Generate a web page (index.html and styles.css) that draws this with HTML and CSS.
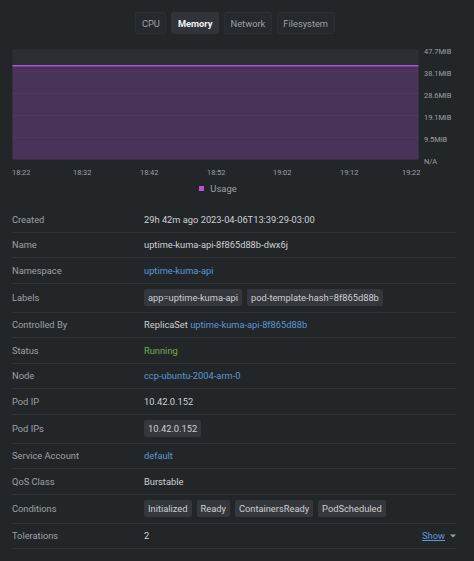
FILE: index.html
```html
<!DOCTYPE html>
<html>
<head>
<meta charset="utf-8">
<link rel="stylesheet" href="styles.css">
</head>
<body>
<div class="tabs">
  <div class="tab">CPU</div>
  <div class="tab active">Memory</div>
  <div class="tab">Network</div>
  <div class="tab">Filesystem</div>
</div>
<svg class="chart" width="474" height="141" viewBox="0 0 474 141">
  <rect x="12.5" y="9.5" width="406" height="110" fill="#2b2e32"/>
  <rect x="12.5" y="25.5" width="406" height="94" fill="#4a3358"/>
  <g stroke="#523c63" stroke-width="0.7">
    <line x1="12.5" y1="31.5" x2="418.5" y2="31.5"/>
    <line x1="12.5" y1="53.5" x2="418.5" y2="53.5"/>
    <line x1="12.5" y1="75.5" x2="418.5" y2="75.5"/>
    <line x1="12.5" y1="97.5" x2="418.5" y2="97.5"/>
  </g>
  <line x1="12.5" y1="25.8" x2="418.5" y2="25.8" stroke="#ab52cc" stroke-width="1.6"/>
  <g class="ylab">
    <text x="424" y="12">47.7MiB</text>
    <text x="424" y="34">38.1MiB</text>
    <text x="424" y="56">28.6MiB</text>
    <text x="424" y="78">19.1MiB</text>
    <text x="424" y="100">9.5MiB</text>
    <text x="424" y="122">N/A</text>
  </g>
  <g class="xlab">
    <text x="12" y="133.5">18:22</text>
    <text x="73" y="133.5">18:32</text>
    <text x="140" y="133.5">18:42</text>
    <text x="207" y="133.5">18:52</text>
    <text x="273" y="133.5">19:02</text>
    <text x="340" y="133.5">19:12</text>
    <text x="402" y="133.5">19:22</text>
  </g>
</svg>
<div class="legend"><span class="swatch"></span><span>Usage</span></div>
<div class="details">
  <div class="row"><div class="k">Created</div><div class="v">29h 42m ago 2023-04-06T13:39:29-03:00</div></div>
  <div class="row"><div class="k">Name</div><div class="v">uptime-kuma-api-8f865d88b-dwx6j</div></div>
  <div class="row"><div class="k">Namespace</div><div class="v"><a class="link">uptime-kuma-api</a></div></div>
  <div class="row chips"><div class="k">Labels</div><div class="v"><span class="chip">app=uptime-kuma-api</span><span class="chip">pod-template-hash=8f865d88b</span></div></div>
  <div class="row"><div class="k">Controlled By</div><div class="t">ReplicaSet <a class="link">uptime-kuma-api-8f865d88b</a></div></div>
  <div class="row"><div class="k">Status</div><div class="v ok">Running</div></div>
  <div class="row"><div class="k">Node</div><div class="v"><a class="link">ccp-ubuntu-2004-arm-0</a></div></div>
  <div class="row"><div class="k">Pod IP</div><div class="v">10.42.0.152</div></div>
  <div class="row chips"><div class="k">Pod IPs</div><div class="v"><span class="chip">10.42.0.152</span></div></div>
  <div class="row"><div class="k">Service Account</div><div class="v"><a class="link">default</a></div></div>
  <div class="row"><div class="k">QoS Class</div><div class="v">Burstable</div></div>
  <div class="row chips"><div class="k">Conditions</div><div class="v"><span class="chip">Initialized</span><span class="chip">Ready</span><span class="chip">ContainersReady</span><span class="chip">PodScheduled</span></div></div>
  <div class="row"><div class="k">Tolerations</div><div class="v spread"><span>2</span><span class="show"><a class="link u">Show</a><svg width="6" height="4" viewBox="0 0 6 4"><path d="M0 0.5h6L3 3.5z" fill="#9da1a6"/></svg></span></div></div>
</div>
</body>
</html>
```
FILE: styles.css
```css
html, body {
  margin: 0;
  padding: 0;
  background: #232629;
  font-family: Roboto, "Liberation Sans", sans-serif;
  width: 474px;
  height: 561px;
  overflow: hidden;
}
.tabs {
  display: flex;
  justify-content: center;
  gap: 5px;
  padding: 12px 4px 6px 0;
  height: 22px;
}
.tab {
  height: 22px;
  box-sizing: border-box;
  padding: 0 5.5px;
  display: flex;
  align-items: center;
  font-size: 9.3px;
  color: #9da1a6;
  background: #25282c;
  border: 1px solid #2b2e32;
  border-radius: 2px;
}
.tab.active {
  background: #303338;
  border-color: #303338;
  color: #f0f2f4;
  font-weight: bold;
}
.chart {
  display: block;
}
.ylab text, .xlab text {
  font-size: 7.4px;
  fill: #9da1a6;
  dominant-baseline: middle;
}
.legend {
  height: 14px;
  display: flex;
  justify-content: center;
  align-items: center;
  gap: 6px;
  font-size: 9.4px;
  color: #9da1a6;
  padding-right: 38px;
}
.swatch {
  width: 5px;
  height: 5px;
  background: #c04fd6;
}
.details {
  margin: 12px 18px 0 12px;
}
.row {
  display: grid;
  grid-template-columns: 132px 1fr;
  align-items: center;
  height: 24.5px;
  border-bottom: 1px solid #2f3236;
  font-size: 9.3px;
}
.row.chips {
  height: 28px;
}
.k {
  color: #9da1a6;
}
.v, .t {
  color: #cdd0d3;
  white-space: nowrap;
}
.v {
  display: flex;
  align-items: center;
  gap: 5px;
}
.v.spread {
  justify-content: space-between;
}
.ok {
  color: #6fb04e;
}
.link {
  color: #5b96d6;
}
.link.u {
  text-decoration: underline;
}
.show {
  display: flex;
  align-items: center;
  gap: 5px;
}
.chip {
  background: #34373b;
  height: 17px;
  display: flex;
  align-items: center;
  padding: 0 4px;
  border-radius: 2px;
}
```
